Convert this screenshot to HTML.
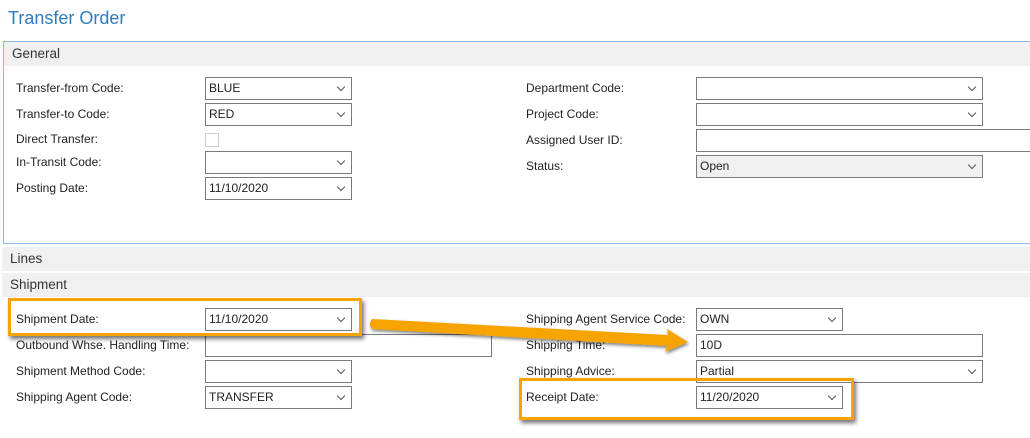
<!DOCTYPE html>
<html><head><style>
body{margin:0;width:1030px;height:438px;background:#fff;font-family:"Liberation Sans",sans-serif;font-size:12px;color:#222;position:relative;overflow:hidden}
.a{position:absolute}
.t{left:8px;top:8px;font-size:18px;color:#2f7bbd}
.hd{background:#f0f0f0;font-size:13.5px;color:#333;padding-left:8px;box-sizing:border-box;line-height:24px}
.l{font-size:12px;color:#222;line-height:14px}
.in{border:1px solid #7a7a7a;box-sizing:border-box;height:23px;background:#fff;line-height:21px;padding-left:3px;font-size:12px}
.dd::after{content:"";position:absolute;right:7px;top:6px;width:5px;height:5px;border-right:1px solid #555;border-bottom:1px solid #555;transform:rotate(45deg)}
.ob{border:3px solid #f7a400;box-shadow:2px 3px 4px rgba(0,0,0,.55);box-sizing:border-box}
</style></head><body>
<div class="a t">Transfer Order</div>
<div class="a" style="left:3px;top:41px;width:1030px;height:203px;border:1px solid #8db8ea;box-sizing:border-box"></div>
<div class="a hd" style="left:4px;top:42px;width:1026px;height:24px">General</div>

<div class="a l" style="left:16px;top:81px">Transfer-from Code:</div>
<div class="a in dd" style="left:205px;top:77px;width:147px">BLUE</div>
<div class="a l" style="left:16px;top:107px">Transfer-to Code:</div>
<div class="a in dd" style="left:205px;top:103px;width:147px">RED</div>
<div class="a l" style="left:16px;top:132px">Direct Transfer:</div>
<div class="a" style="left:205px;top:133px;width:12px;height:12px;border:1px solid #ccc"></div>
<div class="a l" style="left:16px;top:155px">In-Transit Code:</div>
<div class="a in dd" style="left:205px;top:151px;width:147px"></div>
<div class="a l" style="left:16px;top:181px">Posting Date:</div>
<div class="a in dd" style="left:205px;top:177px;width:147px">11/10/2020</div>

<div class="a l" style="left:526px;top:81px">Department Code:</div>
<div class="a in dd" style="left:696px;top:77px;width:287px"></div>
<div class="a l" style="left:526px;top:107px">Project Code:</div>
<div class="a in dd" style="left:696px;top:103px;width:287px"></div>
<div class="a l" style="left:526px;top:133px">Assigned User ID:</div>
<div class="a in" style="left:696px;top:129px;width:340px"></div>
<div class="a l" style="left:526px;top:159px">Status:</div>
<div class="a in dd" style="left:696px;top:155px;width:287px;background:#f0f0f0">Open</div>

<div class="a hd" style="left:2px;top:247px;width:1028px;height:24px">Lines</div>
<div class="a hd" style="left:2px;top:273px;width:1028px;height:24px">Shipment</div>

<div class="a l" style="left:16px;top:312px">Shipment Date:</div>
<div class="a in dd" style="left:205px;top:308px;width:147px">11/10/2020</div>
<div class="a l" style="left:16px;top:338px">Outbound Whse. Handling Time:</div>
<div class="a in" style="left:205px;top:334px;width:287px"></div>
<div class="a l" style="left:16px;top:364px">Shipment Method Code:</div>
<div class="a in dd" style="left:205px;top:360px;width:147px"></div>
<div class="a l" style="left:16px;top:390px">Shipping Agent Code:</div>
<div class="a in dd" style="left:205px;top:386px;width:147px">TRANSFER</div>

<div class="a l" style="left:526px;top:312px">Shipping Agent Service Code:</div>
<div class="a in dd" style="left:696px;top:308px;width:147px">OWN</div>
<div class="a l" style="left:526px;top:338px">Shipping Time:</div>
<div class="a in" style="left:696px;top:334px;width:287px">10D</div>
<div class="a l" style="left:526px;top:364px">Shipping Advice:</div>
<div class="a in dd" style="left:696px;top:360px;width:287px">Partial</div>
<div class="a l" style="left:526px;top:390px">Receipt Date:</div>
<div class="a in dd" style="left:696px;top:386px;width:147px">11/20/2020</div>

<div class="a ob" style="left:8px;top:298px;width:354px;height:38px"></div>
<div class="a ob" style="left:519px;top:378px;width:335px;height:42px"></div>

<svg class="a" style="left:0;top:0" width="1030" height="438">
<defs><filter id="s"><feDropShadow dx="1" dy="2" stdDeviation="1.5" flood-opacity="0.5"/></filter></defs>
<g filter="url(#s)" fill="#f7a400">
<path d="M372 319 L668 335 L667 329 L688 342 L665 352 L667 346 L372 329 Q368 324 372 319 Z"/>
</g>
</svg>
</body></html>
